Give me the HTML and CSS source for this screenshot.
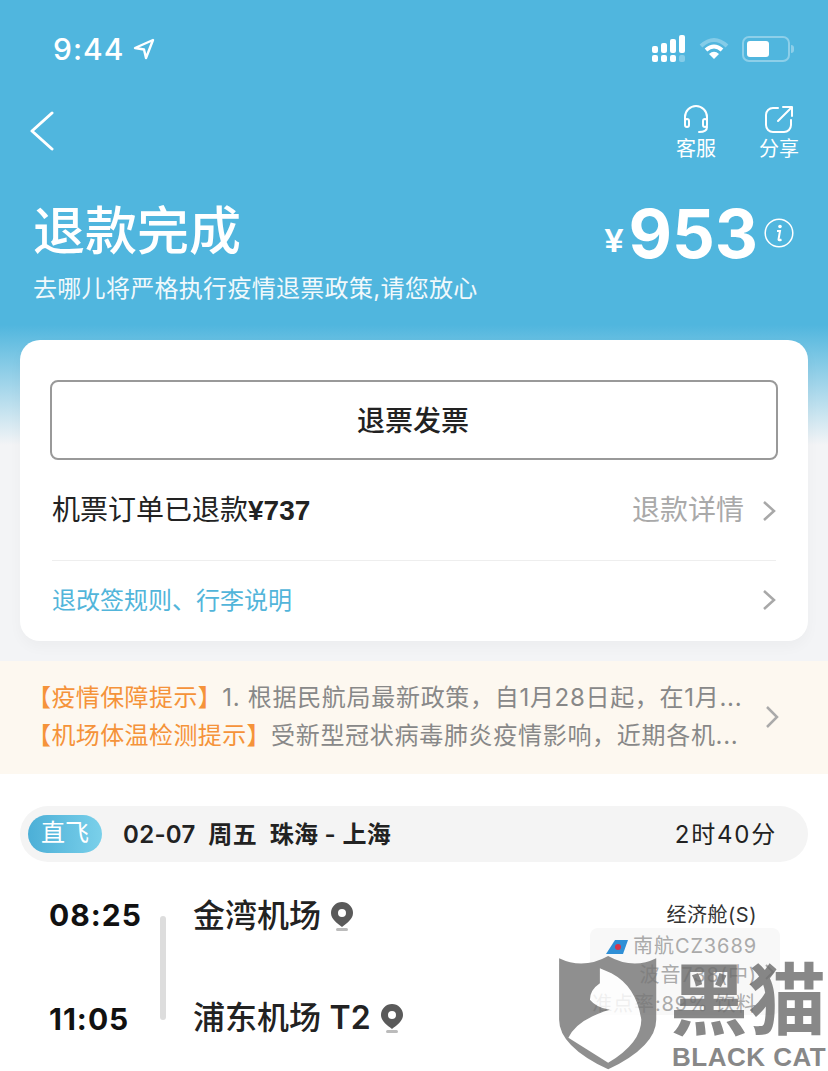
FILE: index.html
```html
<!DOCTYPE html>
<html lang="zh-CN">
<head>
    <meta charset="UTF-8">
    <meta name="viewport" content="width=device-width, initial-scale=1.0">
    <title>退款完成</title>
    <link rel="stylesheet" href="styles.css">
</head>
<body>
    <div class="page">
        <div class="top">
            <div class="status-bar">
                <div class="status-time">
                    <span>9:44</span>
                    <svg width="22" height="22" viewBox="0 0 22 22"><path d="M20 2 L2 10 L11 11.500 L13 20 Z" fill="none" stroke="#fff" stroke-width="2.400" stroke-linejoin="round"/></svg>
                </div>
                <div class="status-icons">
                    <svg width="34" height="28" viewBox="0 0 34 28">
                        <g fill="#fff">
                            <rect x="0" y="11" width="6" height="7" rx="2"/><rect x="9" y="8" width="6" height="10" rx="2"/><rect x="18" y="4" width="6" height="14" rx="2"/><rect x="27" y="0" width="6" height="18" rx="2"/>
                            <rect x="0" y="20" width="6" height="7" rx="2"/><rect x="9" y="20" width="6" height="7" rx="2"/><rect x="18" y="20" width="6" height="7" rx="2"/>
                        </g>
                        <rect x="27" y="20" width="6" height="7" rx="2" fill="#fff" opacity=".3"/>
                    </svg>
                    <svg class="wifi" width="30" height="24" viewBox="0 0 30 24">
                        <path d="M2 9 Q15 -3 28 9" fill="none" stroke="#fff" stroke-width="4" opacity=".3"/>
                        <path d="M7 13 Q15 6 23 13" fill="none" stroke="#fff" stroke-width="4"/>
                        <path d="M10 17 Q15 12.500 20 17 L15 22 Z" fill="#fff"/>
                    </svg>
                    <div class="battery"><div class="battery-level"></div></div>
                    <div class="battery-cap"></div>
                </div>
            </div>

            <div class="nav-bar">
                <svg class="back" width="26" height="40" viewBox="0 0 26 40"><path d="M23 2 L3 20 L23 38" fill="none" stroke="#fff" stroke-width="3" stroke-linecap="round" stroke-linejoin="round"/></svg>
                <div class="nav-actions">
                    <div class="nav-action">
                        <svg width="30" height="30" viewBox="0 0 30 30" fill="none" stroke="#fff" stroke-width="2" stroke-linecap="round">
                            <path d="M4 16 V12 a11 11 0 0 1 22 0 V16"/>
                            <rect x="4" y="14" width="4" height="8" rx="2"/>
                            <rect x="22" y="14" width="4" height="8" rx="2"/>
                            <path d="M26 22 Q26 27 18 27"/>
                        </svg>
                        <span>客服</span>
                    </div>
                    <div class="nav-action">
                        <svg width="30" height="30" viewBox="0 0 30 30" fill="none" stroke="#fff" stroke-width="2" stroke-linecap="round" stroke-linejoin="round">
                            <path d="M14 3 H9 a7 7 0 0 0 -7 7 V20 a7 7 0 0 0 7 7 H20 a7 7 0 0 0 7 -7 V15"/>
                            <path d="M14 16 L27 3 M19 2 H28 V11"/>
                        </svg>
                        <span>分享</span>
                    </div>
                </div>
            </div>

            <div class="summary">
                <div>
                    <h1>退款完成</h1>
                    <p class="summary-note">去哪儿将严格执行疫情退票政策,请您放心</p>
                </div>
                <div class="amount">
                    <span class="amount-unit">¥</span><span class="amount-value">953</span>
                    <svg width="30" height="30" viewBox="0 0 30 30"><circle cx="15" cy="15" r="13.800" fill="none" stroke="#fff" stroke-width="1.500"/><circle cx="16" cy="8.500" r="1.800" fill="#fff"/><path d="M13 13 H16 L14.500 21.500 Q14.500 23 17.500 21.500" fill="none" stroke="#fff" stroke-width="2"/></svg>
                </div>
            </div>

            <div class="card">
                <div class="invoice-btn">退票发票</div>
                <div class="card-row refund-row">
                    <span class="refund-text">机票订单已退款<b>¥737</b></span>
                    <span class="refund-link">退款详情
                        <svg class="chevron" width="14" height="22" viewBox="0 0 14 22"><path d="M2 2 L12 11 L2 20" fill="none" stroke="#a8a8a8" stroke-width="2.500"/></svg>
                    </span>
                </div>
                <div class="card-row rules-row">
                    <span>退改签规则、行李说明</span>
                    <svg class="chevron" width="14" height="22" viewBox="0 0 14 22"><path d="M2 2 L12 11 L2 20" fill="none" stroke="#a8a8a8" stroke-width="2.500"/></svg>
                </div>
            </div>
        </div>

        <div class="notice">
            <div class="notice-text">
                <p><em>【疫情保障提示】</em>1. 根据民航局最新政策，自1月28日起，在1月...</p>
                <p><em>【机场体温检测提示】</em>受新型冠状病毒肺炎疫情影响，近期各机...</p>
            </div>
            <svg width="14" height="24" viewBox="0 0 14 24"><path d="M2 2 L12 12 L2 22" fill="none" stroke="#aaa" stroke-width="2.500"/></svg>
        </div>

        <div class="flight">
            <div class="flight-head">
                <span class="badge">直飞</span>
                <span class="flight-title">02-07&nbsp; 周五&nbsp; 珠海 - 上海</span>
                <span class="flight-time">2时40分</span>
            </div>
            <div class="flight-body">
                <div class="times">
                    <span>08:25</span>
                    <span>11:05</span>
                </div>
                <div class="line"></div>
                <div class="airports">
                    <div class="airport">金湾机场
                        <svg width="24" height="30" viewBox="0 0 24 30"><path fill-rule="evenodd" d="M12 1 a11 11 0 0 1 11 11 c0 6 -6 10 -11 14 c-5 -4 -11 -8 -11 -14 a11 11 0 0 1 11 -11 Z M12 8 a4 4 0 1 0 0 8 a4 4 0 0 0 0 -8 Z" fill="#5a5a5a"/><rect x="6" y="27" width="12" height="3" rx="1.500" fill="#bbb"/></svg>
                    </div>
                    <div class="airport">
                        <span>浦东机场 <b>T2</b></span>
                        <svg width="24" height="30" viewBox="0 0 24 30"><path fill-rule="evenodd" d="M12 1 a11 11 0 0 1 11 11 c0 6 -6 10 -11 14 c-5 -4 -11 -8 -11 -14 a11 11 0 0 1 11 -11 Z M12 8 a4 4 0 1 0 0 8 a4 4 0 0 0 0 -8 Z" fill="#5a5a5a"/><rect x="6" y="27" width="12" height="3" rx="1.500" fill="#bbb"/></svg>
                    </div>
                </div>
                <div class="cabin">
                    <div class="cabin-name">经济舱(S)</div>
                    <div class="plane-info">
                        <div class="carrier">
                            <svg width="22" height="16" viewBox="0 0 22 16"><path d="M9 1 H22 L17 15 H0 Z" fill="#2f8fd6"/><circle cx="12" cy="8" r="3" fill="#d8344a"/></svg>
                            南航CZ3689
                        </div>
                        <div>波音738(中)</div>
                        <div>准点率:89% 饮料</div>
                        <svg class="plane-chevron" width="10" height="16" viewBox="0 0 10 16"><path d="M1 1 L8 8 L1 15" fill="none" stroke="#aaa" stroke-width="2"/></svg>
                    </div>
                </div>
            </div>
        </div>

        <div class="watermark">
            <svg width="98" height="116" viewBox="57 225 295 350">
                <path d="M57 235 Q130 270 205 228 Q280 270 350 235 L350 420 Q350 500 205 570 Q57 500 57 420 Z" fill="#777"/>
                <path d="M180 265 L215 280 Q290 320 305 420 Q305 490 205 550 L85 475 Q110 420 210 390 Q170 385 150 360 Q150 330 180 310 Z" fill="#fff"/>
            </svg>
            <div class="watermark-text">
                <div class="watermark-cn">黑猫</div>
                <div class="watermark-en">BLACK CAT</div>
            </div>
        </div>
    </div>
</body>
</html>
```

FILE: styles.css
```css
* {
    box-sizing: border-box;
}

body {
    margin: 0;
    font-family: Inter, "Noto Sans CJK SC", sans-serif;
    background-color: #fff;
}

.page {
    position: relative;
    width: 828px;
    height: 1071px;
    overflow: hidden;
    color: #222;
}

.top {
    padding-bottom: 20px;
    background: linear-gradient(#50b6de 0, #50b6de 325px, #f3f4f6 445px);
}

/* status bar */
.status-bar {
    display: flex;
    justify-content: space-between;
    align-items: center;
    height: 98px;
    padding: 0 34px 0 53px;
    color: #fff;
}

.status-time {
    display: flex;
    align-items: center;
    gap: 9px;
    font-size: 30px;
    font-weight: 500;
    letter-spacing: 1px;
}

.status-icons {
    display: flex;
    align-items: center;
}

.wifi {
    margin-left: 13px;
}

.battery {
    width: 48px;
    height: 26px;
    margin-left: 13px;
    padding: 3px;
    border: 2px solid rgba(255, 255, 255, .35);
    border-radius: 7px;
}

.battery-level {
    width: 22px;
    height: 100%;
    border-radius: 3px;
    background-color: #fff;
}

.battery-cap {
    width: 3px;
    height: 8px;
    margin-left: 1px;
    border-radius: 0 3px 3px 0;
    background-color: rgba(255, 255, 255, .35);
}

/* nav */
.nav-bar {
    display: flex;
    justify-content: space-between;
    align-items: flex-start;
    height: 105px;
    padding: 8px 29px 0 29px;
}

.back {
    margin-top: 5px;
}

.nav-actions {
    display: flex;
    gap: 43px;
}

.nav-action {
    display: flex;
    flex-direction: column;
    align-items: center;
    margin-top: -1px;
    font-size: 20px;
    line-height: 28px;
    color: #fff;
}

/* refund summary */
.summary {
    display: flex;
    justify-content: space-between;
    height: 137px;
    padding: 0 34px;
    color: #fff;
}

h1 {
    margin: -1px 0 0 -1px;
    font-size: 52px;
    font-weight: 500;
    line-height: 60px;
}

.summary-note {
    margin: 9px 0 0 -1px;
    font-size: 24px;
    line-height: 36px;
    letter-spacing: .3px;
    opacity: .92;
}

.amount {
    display: flex;
    align-items: flex-start;
    height: 70px;
    margin-top: -8px;
}

.amount-unit {
    margin-top: 26px;
    margin-right: 5px;
    font-family: "Liberation Sans", sans-serif;
    font-size: 34px;
    font-weight: 700;
}

.amount-value {
    font-size: 67px;
    font-weight: 700;
    line-height: 78px;
}

.amount svg {
    margin-top: 23px;
    margin-left: 6px;
}

/* refund card */
.card {
    height: 301px;
    margin: 0 20px;
    padding: 40px 30px 0;
    border-radius: 20px;
    background-color: #fff;
    box-shadow: 0 6px 14px rgba(0, 0, 0, .03);
}

.invoice-btn {
    height: 80px;
    padding-right: 2px;
    border: 2px solid #999;
    border-radius: 8px;
    font-size: 28px;
    font-weight: 500;
    line-height: 78px;
    text-align: center;
}

.card-row {
    display: flex;
    justify-content: space-between;
    align-items: center;
    margin: 0 2px;
}

.refund-row {
    height: 101px;
    padding-bottom: 5px;
    border-bottom: 1px solid #eee;
    font-size: 28px;
}

.refund-text b {
    font-family: "Liberation Sans", sans-serif;
    font-weight: 700;
}

.refund-link {
    display: flex;
    align-items: center;
    color: #a9a9a9;
}

.refund-link .chevron {
    margin-left: 18px;
    margin-top: 7px;
}

.rules-row {
    height: 79px;
    padding-bottom: 2px;
    font-size: 24px;
    color: #52b5da;
}

.rules-row span {
    margin-bottom: 2px;
}

/* notice */
.notice {
    display: flex;
    justify-content: space-between;
    align-items: center;
    height: 113px;
    padding: 0 49px 2px 27px;
    background-color: #fdf8f0;
}

.notice-text p {
    margin: 0;
    font-size: 24px;
    line-height: 38px;
    letter-spacing: .7px;
    color: #888;
    white-space: nowrap;
}

.notice-text em {
    font-style: normal;
    letter-spacing: .4px;
    color: #f5933a;
}

/* flight */
.flight {
    padding: 32px 20px 0;
}

.flight-head {
    display: flex;
    align-items: center;
    height: 56px;
    padding: 0 31px 0 8px;
    border-radius: 28px;
    background-color: #f4f4f4;
    font-size: 24px;
}

.badge {
    width: 74px;
    height: 38px;
    border-radius: 19px;
    background: linear-gradient(90deg, #4cafd7, #7ad0ea);
    color: #fff;
    line-height: 36px;
    text-align: center;
}

.flight-title {
    flex: 1;
    margin-left: 21px;
    margin-bottom: 4px;
    font-weight: 600;
    letter-spacing: .3px;
}

.flight-time {
    margin-bottom: 4px;
    letter-spacing: 1.800px;
}

.flight-body {
    display: flex;
    padding-top: 32px;
}

.times {
    display: flex;
    flex-direction: column;
    gap: 62px;
    width: 140px;
    padding-left: 29px;
    font-size: 30px;
    font-weight: 700;
    line-height: 42px;
    letter-spacing: 1px;
    color: #111;
}

.line {
    width: 6px;
    height: 104px;
    margin-top: 22px;
    border-radius: 3px;
    background-color: #ddd;
}

.airports {
    display: flex;
    flex-direction: column;
    gap: 58px;
    width: 391px;
    padding-left: 27px;
    font-size: 32px;
    font-weight: 500;
    line-height: 44px;
}

.airport {
    display: flex;
    align-items: center;
    gap: 9px;
}

.airport b {
    font-weight: 600;
}

.cabin {
    width: 190px;
    margin-left: 33px;
    font-size: 20px;
    color: #333;
}

.cabin-name {
    height: 28px;
    margin-top: 7px;
    margin-right: 23px;
    line-height: 28px;
    letter-spacing: .5px;
    text-align: right;
}

.plane-info {
    position: relative;
    display: flex;
    flex-direction: column;
    align-items: flex-end;
    height: 87px;
    margin-top: -1px;
    padding: 4px 23px 0 0;
    border-radius: 8px;
    background-color: #f8f8f8;
    line-height: 29px;
    letter-spacing: .9px;
    color: #aaa;
    white-space: nowrap;
}

.carrier {
    display: flex;
    align-items: center;
    gap: 5px;
}

.plane-chevron {
    position: absolute;
    right: 5px;
    top: 36px;
}

/* black cat watermark */
.watermark {
    position: absolute;
    left: 559px;
    top: 955px;
    display: flex;
    gap: 13px;
    opacity: .82;
}

.watermark-text {
    color: #6e6e6e;
    font-weight: 700;
}

.watermark-cn {
    margin-top: 4px;
    font-size: 78px;
    line-height: 84px;
    white-space: nowrap;
}

.watermark-en {
    margin: 1px 0 0 2px;
    font-family: "Liberation Sans", sans-serif;
    font-size: 26px;
    line-height: 26px;
    letter-spacing: .5px;
    white-space: nowrap;
}
```
